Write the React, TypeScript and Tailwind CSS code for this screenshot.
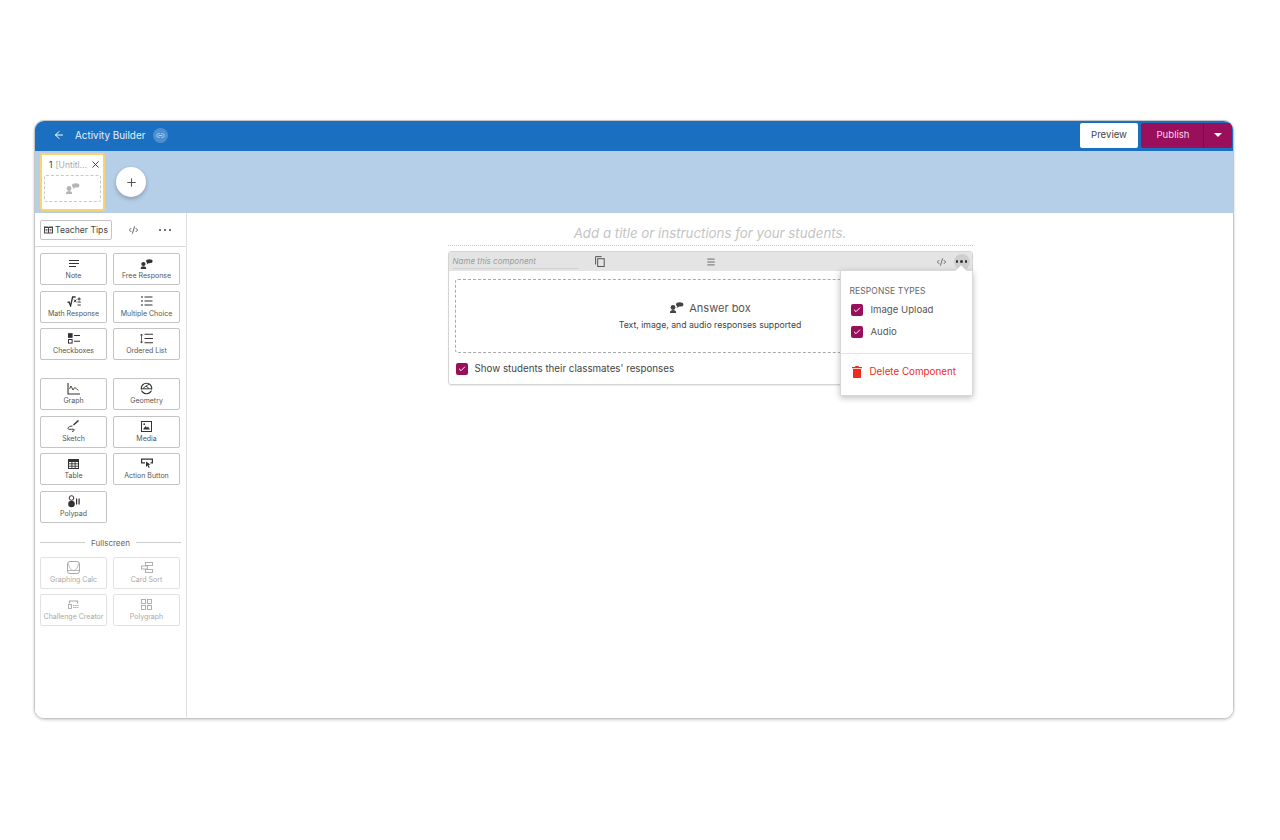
import { ArrowLeft, Check, Link2, Menu, Plus, X, Code2 } from "lucide-react";
import type { ReactNode } from "react";

const FreeResponseIcon = ({ className = "" }: { className?: string }) => (
  <svg viewBox="0 0 16 12" className={className} fill="currentColor">
    <circle cx="4.2" cy="6" r="2.6" />
    <path d="M0.8 12c0-2.400 1.400-3.200 3.400-3.200s3.400 .8 3.400 3.200z" />
    <ellipse cx="11.500" cy="2.600" rx="4" ry="2.400" />
    <path d="M9 3.500l-.8 3 3-2z" />
  </svg>
);

const LinesIcon = () => (
  <svg viewBox="0 0 12 10" className="h-[10px] w-[12px]" stroke="currentColor" strokeWidth="1.1">
    <path d="M1 1.500h10M1 4.500h10M1 7.500h7" />
  </svg>
);

const MathIcon = () => (
  <svg viewBox="0 0 14 11" className="h-[11px] w-[14px]" fill="none" stroke="currentColor" strokeWidth="1.300">
    <path d="M0.500 6.500l1.500-.6 1.600 4L5.600 1h3" />
    <path d="M7 3.500l2.400 2.800M9.400 3.500L7 6.300M10.500 3h3.300M12.100 1.400v3.200M10.500 6h3.300M10.500 9h3.300" strokeWidth="1" />
  </svg>
);

const ListIcon = () => (
  <svg viewBox="0 0 12 10" className="h-[10px] w-[12px]" stroke="currentColor" strokeWidth="1" fill="currentColor">
    <path d="M3.500 1h8M3.500 5h8M3.500 9h8" fill="none" />
    <circle cx="1" cy="1" r=".4" />
    <circle cx="1" cy="5" r=".4" />
    <circle cx="1" cy="9" r=".4" />
  </svg>
);

const CheckboxesIcon = () => (
  <svg viewBox="0 0 12 11" className="h-[11px] w-[12px]" fill="none" stroke="currentColor">
    <rect x=".5" y=".7" width="3.600" height="3.600" fill="currentColor" />
    <rect x=".5" y="6.500" width="3.600" height="3.600" />
    <path d="M6 2.500h6M6 8.300h6" strokeWidth="1.100" />
  </svg>
);

const OrderedIcon = () => (
  <svg viewBox="0 0 13 11" className="h-[11px] w-[13px]" fill="none" stroke="currentColor">
    <path d="M4.500 1.200h8.500M4.500 5.500h8.500M4.500 9.800h8.500" strokeWidth="1.100" />
    <path d="M1.500 1v9M.3 2.500L1.500 1l1.200 1.500M.3 8.500L1.500 10l1.200-1.500" strokeWidth=".8" />
  </svg>
);

const GraphIcon = () => (
  <svg viewBox="0 0 13 12" className="h-[12px] w-[13px]" fill="none" stroke="currentColor">
    <path d="M1 0v11h12" strokeWidth="1.100" />
    <path d="M2.500 6l1.500-3 2 4 1.700-2.500 1.600 1 2 2" strokeWidth=".9" />
  </svg>
);

const GeometryIcon = () => (
  <svg viewBox="0 0 13 13" className="h-[13px] w-[13px]" fill="none" stroke="currentColor">
    <circle cx="6.500" cy="6.500" r="5.300" strokeWidth="1.100" />
    <path d="M0 8h13" strokeWidth="1.200" stroke="white" />
    <path d="M1 6.800h11" strokeWidth="1" />
    <path d="M3 6.500l3-2.500 3.500-2M6 4l3 2.500" strokeWidth=".9" />
  </svg>
);

const SketchIcon = () => (
  <svg viewBox="0 0 13 12" className="h-[12px] w-[13px]" fill="none" stroke="currentColor">
    <path d="M11.500 .5L6.500 5" strokeWidth="1.500" />
    <path d="M5.500 6C3 6 1 7.200 1 8.500s3 .7 5 .7 2 1.600-1 2.300" strokeWidth="1" />
  </svg>
);

const MediaIcon = () => (
  <svg viewBox="0 0 11 11" className="h-[11px] w-[11px]" fill="currentColor">
    <path d="M0 0h11v11H0zM1 1v9h9V1z" fillRule="evenodd" />
    <path d="M2 8.500L4.500 5 6 6.800 7 5.500l2 3z" />
    <circle cx="3.200" cy="3.200" r=".9" />
  </svg>
);

const TableIcon = () => (
  <svg viewBox="0 0 11 10" className="h-[10px] w-[11px]" fill="none" stroke="currentColor">
    <rect x=".5" y=".5" width="10" height="9" />
    <path d="M0 2h11" strokeWidth="2" />
    <path d="M0 4.800h11M0 7.200h11M3.900 1v9M7.100 1v9" strokeWidth=".9" />
  </svg>
);

const ActionIcon = () => (
  <svg viewBox="0 0 12 11" className="h-[11px] w-[12px]" fill="currentColor">
    <path d="M0 .5h12v5H9.500V4.300h1.300V1.700H1.200v2.600H4v1.200H0z" />
    <path d="M5 3.500l4.500 3-2 .5 1.200 2.500-1 .5L6.500 7.500 5 9z" />
  </svg>
);

const PolypadIcon = () => (
  <svg viewBox="0 0 12 13" className="h-[13px] w-[12px]" fill="currentColor">
    <circle cx="3.500" cy="3" r="2.300" fill="none" stroke="currentColor" />
    <path d="M8 3.500h1.200v6H8zM10.500 3.500h1.200v6h-1.200z" />
    <circle cx="3.500" cy="9" r="3.300" />
  </svg>
);

const CalcIcon = () => (
  <svg viewBox="0 0 13 13" className="h-[13px] w-[13px]" fill="none" stroke="currentColor">
    <rect x=".5" y=".5" width="12" height="12" rx="2.500" />
    <path d="M1.500 2.500c1 5 2.500 7 5 7s4-2 5-7M1 9.500h11" strokeWidth=".8" />
  </svg>
);

const CardSortIcon = () => (
  <svg viewBox="0 0 12 11" className="h-[11px] w-[12px]" fill="none" stroke="currentColor" strokeWidth=".9">
    <rect x="4.500" y=".5" width="7" height="3" />
    <rect x=".5" y="4" width="6" height="3" />
    <rect x="4.500" y="7.500" width="7" height="3" />
  </svg>
);

const ChallengeIcon = () => (
  <svg viewBox="0 0 11 9" className="h-[9px] w-[11px]" fill="none" stroke="currentColor" strokeWidth=".9">
    <path d="M1.500 3.500V1h8v2.500" strokeWidth="1.200" />
    <rect x=".5" y="4.500" width="3" height="4" />
    <path d="M5 5.500h5.500M5 7.500h5.500" strokeDasharray="1.500 .6" strokeWidth="1.200" />
  </svg>
);

const PolygraphIcon = () => (
  <svg viewBox="0 0 11 11" className="h-[11px] w-[11px]" fill="none" stroke="currentColor" strokeWidth=".9">
    <rect x=".5" y=".5" width="4" height="4" />
    <rect x="6.500" y=".5" width="4" height="4" />
    <rect x=".5" y="6.500" width="4" height="4" />
    <rect x="6.500" y="6.500" width="4" height="4" />
  </svg>
);

const TipsIcon = () => (
  <svg viewBox="0 0 9 8" className="h-[8px] w-[9px]" fill="currentColor">
    <path d="M0 .5h3.700l.8.6.8-.6H9v7H0zM4 2H1v4.500h3zM8 2H5v4.500h3z" fillRule="evenodd" />
    <path d="M1.500 3H3.500v.7H1.500zM5.500 3H7.500v.7H5.500zM1.500 4.500H3.500v.7H1.500zM5.500 4.500H7.500v.7H5.500z" />
  </svg>
);

const CopyIcon = () => (
  <svg viewBox="0 0 10 11" className="h-[11px] w-[10px]" fill="none" stroke="currentColor">
    <path d="M.6 8.500V.6h6" strokeWidth="1" />
    <rect x="2.700" y="2.700" width="6.500" height="7.800" strokeWidth="1" />
  </svg>
);

const TrashIcon = () => (
  <svg viewBox="0 0 10 12" className="h-[12px] w-[10px]" fill="currentColor">
    <path d="M3.500 0h3l.5 1h3v1.200H0V1h3z" />
    <path d="M1 3h8v8c0 .6-.4 1-1 1H2c-.6 0-1-.4-1-1z" />
  </svg>
);

const tools: { label: string; icon: ReactNode }[] = [
  { label: "Note", icon: <LinesIcon /> },
  { label: "Free Response", icon: <FreeResponseIcon className="h-[10px] w-[13px]" /> },
  { label: "Math Response", icon: <MathIcon /> },
  { label: "Multiple Choice", icon: <ListIcon /> },
  { label: "Checkboxes", icon: <CheckboxesIcon /> },
  { label: "Ordered List", icon: <OrderedIcon /> },
];

const tools2: { label: string; icon: ReactNode }[] = [
  { label: "Graph", icon: <GraphIcon /> },
  { label: "Geometry", icon: <GeometryIcon /> },
  { label: "Sketch", icon: <SketchIcon /> },
  { label: "Media", icon: <MediaIcon /> },
  { label: "Table", icon: <TableIcon /> },
  { label: "Action Button", icon: <ActionIcon /> },
  { label: "Polypad", icon: <PolypadIcon /> },
];

const fullscreen: { label: string; icon: ReactNode }[] = [
  { label: "Graphing Calc", icon: <CalcIcon /> },
  { label: "Card Sort", icon: <CardSortIcon /> },
  { label: "Challenge Creator", icon: <ChallengeIcon /> },
  { label: "Polygraph", icon: <PolygraphIcon /> },
];

function ToolButton({ label, icon, disabled }: { label: string; icon: ReactNode; disabled?: boolean }) {
  return (
    <div
      className={`flex h-[32px] w-[67px] flex-col items-center justify-end rounded-[2px] border pb-[4px] ${
        disabled ? "border-[#e2e2e2] text-[#a8a8a8]" : "border-[#c4c4c4] text-[#333]"
      }`}
    >
      <div className="flex h-[13px] items-center justify-center">{icon}</div>
      <div className={`mt-[1px] whitespace-nowrap text-[7px] leading-[9px] ${disabled ? "text-[#a8a8a8]" : "text-[#555]"}`}>
        {label}
      </div>
    </div>
  );
}

function MaroonCheck() {
  return (
    <div className="flex h-[12px] w-[12px] items-center justify-center rounded-[2px] bg-[#9a0f5c]">
      <Check className="h-[8px] w-[8px] text-white" strokeWidth={3} />
    </div>
  );
}

export default function App() {
  return (
    <div className="h-[840px] w-[1280px] overflow-hidden bg-white pl-[34px] pt-[120px] font-['Inter','Liberation_Sans',sans-serif]">
      <div className="flex h-[599px] w-[1200px] flex-col overflow-hidden rounded-[10px] border border-[#c6c6c6] shadow-[0_1px_3px_rgba(0,0,0,0.2)]">
        {/* Header */}
        <div className="flex h-[30px] shrink-0 items-center bg-[#1a6fc0] pb-[2px] pl-[18px] pr-[1px] text-white">
          <ArrowLeft className="h-[12px] w-[12px]" strokeWidth={2} />
          <span className="ml-[10px] text-[9.900px] text-[#e8f1fa]">Activity Builder</span>
          <div className="ml-[8px] flex h-[15px] w-[15px] items-center justify-center rounded-full bg-[#4f8fcf]">
            <Link2 className="h-[9px] w-[9px] text-[#cfe0f2]" />
          </div>
          <div className="ml-auto flex h-[25px] w-[58px] items-center justify-center rounded-[2px] bg-white text-[9.600px] text-[#444]">
            Preview
          </div>
          <div className="ml-[3px] flex h-[25px] w-[91px] items-center rounded-[2px] bg-[#9a0f5c] text-[9.600px] text-[#f5dbe9]">
            <div className="flex h-full w-[63px] items-center justify-center border-r border-[#7f0b4b] pl-[2px]">Publish</div>
            <div className="flex flex-1 items-center justify-center">
              <div className="h-0 w-0 border-x-[4px] border-t-[4px] border-x-transparent border-t-white" />
            </div>
          </div>
        </div>

        {/* Screen strip */}
        <div className="flex h-[62px] shrink-0 items-center bg-[#b5cfe8] pl-[5px]">
          <div className="h-[58px] w-[65px] rounded-[3px] border-2 border-[#fbd56b] bg-white px-[2px] pt-[4px]">
            <div className="flex h-[13px] items-center pl-[5px] text-[8.500px]">
              <span className="text-[#333]">1</span>
              <span className="ml-[3px] text-[#aaa]">[Untitl...</span>
              <X className="-mt-[2px] ml-auto h-[11px] w-[11px] shrink-0 text-[#333]" strokeWidth={2} />
            </div>
            <div className="mt-[3px] flex h-[27px] items-center justify-center rounded-[2px] border border-dashed border-[#c8c8c8] text-[#b5b5b5]">
              <FreeResponseIcon className="h-[11px] w-[15px]" />
            </div>
          </div>
          <div className="ml-[11px] flex h-[30px] w-[30px] items-center justify-center rounded-full bg-white shadow-[0_2px_4px_rgba(0,0,0,0.25)]">
            <Plus className="h-[13px] w-[13px] text-[#555]" />
          </div>
        </div>

        <div className="flex min-h-0 flex-1 bg-white">
          {/* Sidebar */}
          <div className="w-[152px] shrink-0 border-r border-[#e0e0e0]">
            <div className="flex h-[34px] items-center border-b border-[#d8d8d8] pl-[5px]">
              <div className="flex h-[20px] w-[72px] items-center justify-center gap-[2px] rounded-[2px] border border-[#c4c4c4] pt-[1px] text-[8.600px] text-[#444]">
                <TipsIcon />
                Teacher Tips
              </div>
              <Code2 className="ml-[16px] h-[10px] w-[11px] text-[#444]" />
              <div className="ml-[20px] flex gap-[3px]">
                <span className="h-[2px] w-[2px] rounded-full bg-[#444]" />
                <span className="h-[2px] w-[2px] rounded-full bg-[#444]" />
                <span className="h-[2px] w-[2px] rounded-full bg-[#444]" />
              </div>
            </div>
            <div className="px-[5px] pt-[6px]">
              <div className="grid grid-cols-[67px_67px] gap-x-[6px] gap-y-[5.500px]">
                {tools.map((t) => (
                  <ToolButton key={t.label} label={t.label} icon={t.icon} />
                ))}
              </div>
              <div className="mt-[18px] grid grid-cols-[67px_67px] gap-x-[6px] gap-y-[5.500px]">
                {tools2.map((t) => (
                  <ToolButton key={t.label} label={t.label} icon={t.icon} />
                ))}
              </div>
              <div className="mt-[14px] flex items-center text-[8px] text-[#666]">
                <div className="h-px flex-1 bg-[#ccc]" />
                <span className="px-[6px]">Fullscreen</span>
                <div className="h-px flex-1 bg-[#ccc]" />
              </div>
              <div className="mt-[8px] grid grid-cols-[67px_67px] gap-x-[6px] gap-y-[5.500px]">
                {fullscreen.map((t) => (
                  <ToolButton key={t.label} label={t.label} icon={t.icon} disabled />
                ))}
              </div>
            </div>
          </div>

          {/* Canvas */}
          <div className="flex flex-1 flex-col items-center">
            <div className="w-[525px]">
              <div className="flex h-[33px] items-end justify-center border-b border-dotted border-[#c8c8c8] pb-[1px] text-[13.300px] italic text-[#c4c4c4]">
                Add a title or instructions for your students.
              </div>
              <div className="relative mt-[5px] h-[134px] rounded-[3px] border border-[#d4d4d4] shadow-[0_1px_1px_rgba(0,0,0,0.08)]">
                <div className="flex h-[19px] items-center rounded-t-[3px] bg-[#e4e4e4] pl-[4px] pr-[2px] text-[#555]">
                  <div className="h-[15px] w-[125px] border-b border-[#cfcfcf] text-[8px] italic leading-[15px] text-[#9b9b9b]">
                    Name this component
                  </div>
                  <div className="ml-[17px]">
                    <CopyIcon />
                  </div>
                  <Menu className="ml-[101px] h-[10px] w-[10px]" />
                  <Code2 className="ml-auto h-[10px] w-[11px]" />
                  <div className="ml-[7px] flex h-[16px] w-[16px] items-center justify-center gap-[2px] rounded-full bg-[#cfcfcf]">
                    <span className="h-[2.500px] w-[2.500px] rounded-full bg-[#333]" />
                    <span className="h-[2.500px] w-[2.500px] rounded-full bg-[#333]" />
                    <span className="h-[2.500px] w-[2.500px] rounded-full bg-[#333]" />
                  </div>
                </div>
                <div className="mx-[6px] mt-[8px] flex h-[74px] flex-col items-center justify-center rounded-[3px] border border-dashed border-[#aaa]">
                  <div className="flex items-center gap-[5px] text-[11px] text-[#555]">
                    <FreeResponseIcon className="h-[11px] w-[15px] text-[#444]" />
                    Answer box
                  </div>
                  <div className="mt-[3px] text-[8.700px] text-[#444]">Text, image, and audio responses supported</div>
                </div>
                <div className="mt-[9px] flex items-center gap-[7px] pl-[7px] text-[9.750px] text-[#444]">
                  <MaroonCheck />
                  Show students their classmates' responses
                </div>

                {/* Dropdown menu */}
                <div className="absolute left-[391px] top-[18px] h-[126px] w-[133px] rounded-[1px] border border-[#d8d8d8] bg-white shadow-[0_2px_6px_rgba(0,0,0,0.25)]">
                  <div className="absolute -top-[4px] right-[7px] h-[8px] w-[8px] rotate-45 bg-white" />
                  <div className="pl-[9px] pt-[15px] text-[8.500px] leading-[11px] tracking-[0.1px] text-[#666]">RESPONSE TYPES</div>
                  <div className="mt-[7px] flex h-[12px] items-center gap-[8px] pl-[10px] text-[9.600px] text-[#555]">
                    <MaroonCheck />
                    Image Upload
                  </div>
                  <div className="mt-[10px] flex h-[12px] items-center gap-[8px] pl-[10px] text-[9.600px] text-[#555]">
                    <MaroonCheck />
                    Audio
                  </div>
                  <div className="mt-[15px] border-t border-[#e4e4e4]" />
                  <div className="mt-[11px] flex items-center gap-[8px] pl-[11px] text-[9.800px] text-[#ee2b1c]">
                    <TrashIcon />
                    Delete Component
                  </div>
                </div>
              </div>
            </div>
          </div>
        </div>
      </div>
    </div>
  );
}
